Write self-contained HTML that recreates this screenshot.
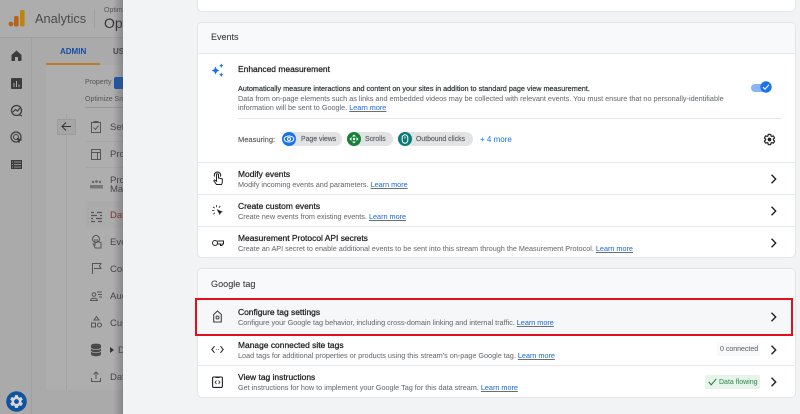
<!DOCTYPE html>
<html><head><meta charset="utf-8"><style>
html,body{margin:0;padding:0;width:800px;height:414px;overflow:hidden;background:#f1f3f4;font-family:"Liberation Sans",sans-serif}
.a{position:absolute;white-space:nowrap}
.t{position:absolute;white-space:nowrap;left:238px;font-size:8.45px;color:#202124;-webkit-text-stroke:.25px #202124}
.d{position:absolute;white-space:nowrap;left:238px;font-size:7.26px;color:#6b6e72;-webkit-text-stroke:.05px #6b6e72}
.d a,.l{color:#1a73e8;text-decoration:underline}
.g{position:absolute;white-space:nowrap;font-size:6.9px;color:#5a5d60;-webkit-text-stroke:.15px #5a5d60}
.line{position:absolute;height:1px;background:#e6e7e9}
svg{position:absolute;overflow:visible}
.sb{position:absolute;white-space:nowrap;font-size:9.5px;color:#444}
</style></head><body>
<!-- left dimmed app -->
<div class="a" style="left:0;top:0;width:123px;height:414px;background:#aaaaaa;overflow:hidden">
 <div class="a" style="left:0;top:0;width:123px;height:37px;background:#adadad"></div>
 <div class="a" style="left:0;top:37px;width:123px;height:1px;background:#a0a0a0"></div>
 <div class="a" style="left:31px;top:38px;width:1px;height:376px;background:#a0a0a0"></div>
 <div class="a" style="left:46px;top:65px;width:77px;height:325px;background:#aeaeae"></div>
 <div class="a" style="left:46px;top:63px;width:54px;height:2px;background:#bd7a28"></div>
 <div class="a" style="left:66px;top:114px;width:1px;height:276px;background:#a2a2a2"></div>
 <svg style="left:8px;top:9px" width="16" height="18" viewBox="0 0 16 18"><circle cx="3" cy="15" r="2.4" fill="#b5651a"/><rect x="6" y="7" width="4.6" height="10.5" rx="1.5" fill="#b5651a"/><rect x="12" y="1" width="4.6" height="16.5" rx="1.5" fill="#bd8410"/></svg>
 <div class="a" style="left:35px;top:11px;font-size:12.8px;color:#4a4a4a">Analytics</div>
 <div class="a" style="left:94px;top:9px;width:1px;height:19px;background:#a0a0a0"></div>
 <div class="a" style="left:104px;top:7px;font-size:7px;color:#555">Optimize</div>
 <div class="a" style="left:104px;top:15px;font-size:14px;color:#333">Optimize</div>
 <div class="a" style="left:60px;top:47px;font-size:8px;color:#174ea6;font-weight:bold">ADMIN</div>
 <div class="a" style="left:113px;top:47px;font-size:8px;color:#444;font-weight:bold">USER</div>
 <div class="a" style="left:85px;top:79px;font-size:7px;color:#555">Property</div>
 <div class="a" style="left:114px;top:77px;width:20px;height:12px;background:#1a55b0;border-radius:2px"></div>
 <div class="a" style="left:85px;top:96px;font-size:7px;color:#555">Optimize Smart</div>
 <div class="a" style="left:85px;top:107px;width:38px;height:1px;background:#999"></div>
 <div class="a" style="left:57px;top:119px;width:17px;height:14px;background:#a6a6a6;border:.5px solid #9c9c9c"></div>
 <svg style="left:57px;top:119px" width="18" height="15" viewBox="0 0 18 15"><path d="M14 7.500H5M9 3.500L5 7.500L9 11.500" fill="none" stroke="#333" stroke-width="1"/></svg>
 <!-- rail icons -->
 <svg style="left:11px;top:50px" width="11" height="11" viewBox="0 0 11 11"><path d="M.5 5L5.500 .5L10.500 5V11H7V7H4V11H.5Z" fill="#3c3c3c"/></svg>
 <svg style="left:11px;top:78px" width="11" height="11" viewBox="0 0 11 11"><rect width="11" height="11" rx="1" fill="#3c3c3c"/><path d="M3 9V5M5.500 9V3M8 9V6.500" stroke="#aaa" stroke-width="1"/></svg>
 <svg style="left:10px;top:104px" width="13" height="13" viewBox="0 0 13 13"><circle cx="6.500" cy="6.500" r="5" fill="none" stroke="#3c3c3c" stroke-width="1.300"/><path d="M3 8L5.500 5.500L7.500 7L10 4M9 10.500L12 12" fill="none" stroke="#3c3c3c" stroke-width="1.200"/></svg>
 <svg style="left:10px;top:131px" width="13" height="13" viewBox="0 0 13 13"><circle cx="6" cy="6" r="5" fill="none" stroke="#3c3c3c" stroke-width="1.200"/><circle cx="6" cy="6" r="2.500" fill="none" stroke="#3c3c3c" stroke-width="1"/><path d="M6.500 6.500L12.500 9L10 10L9 12.500Z" fill="#3c3c3c"/></svg>
 <svg style="left:11px;top:160px" width="11" height="9" viewBox="0 0 11 9"><rect width="11" height="9" fill="#3c3c3c"/><path d="M1 2H2M3 2H10M1 4.500H2M3 4.500H10M1 7H2M3 7H10" stroke="#aaa" stroke-width=".8"/></svg>
 <!-- nav -->
 <svg style="left:91px;top:121px" width="10" height="12" viewBox="0 0 10 12"><rect x=".5" y="1.500" width="9" height="10" fill="none" stroke="#555"/><path d="M3 1.500V.5H7V1.500M2.500 6.500L4.500 8.500L7.500 4.500" fill="none" stroke="#555"/></svg>
 <div class="sb" style="left:110px;top:122px">Setup</div>
 <div class="a" style="left:86px;top:141px;width:37px;height:1px;background:#a5a5a5"></div>
 <svg style="left:91px;top:149px" width="10" height="11" viewBox="0 0 10 11"><rect x=".5" y=".5" width="9" height="10" fill="none" stroke="#555"/><path d="M.5 3.500H9.500M6.500 3.500V10.500" stroke="#555" fill="none"/></svg>
 <div class="sb" style="left:110px;top:149px">Property</div>
 <div class="a" style="left:86px;top:167px;width:37px;height:1px;background:#a5a5a5"></div>
 <svg style="left:90px;top:180px" width="13" height="9" viewBox="0 0 13 9"><circle cx="3" cy="2" r="1.200" fill="#666"/><circle cx="6.500" cy="1.500" r="1.400" fill="#666"/><circle cx="10" cy="2" r="1.200" fill="#666"/><rect y="5" width="13" height="3.500" fill="#777"/></svg>
 <div class="sb" style="left:110px;top:175px">Property</div>
 <div class="sb" style="left:110px;top:184px">Manage</div>
 <div class="a" style="left:86px;top:201px;width:37px;height:27px;background:#ababab"></div>
 <svg style="left:91px;top:211px" width="11" height="12" viewBox="0 0 11 12"><path d="M0 1.500H3M6 1.500H11M0 4.500H6M9 4.500H11M0 7.500H2M5 7.500H11M0 10.500H4M7 10.500H11" stroke="#555" stroke-width="1.200"/></svg>
 <div class="sb" style="left:110px;top:210px;color:#7a2f2f">Data</div>
 <svg style="left:92px;top:235px" width="10" height="14" viewBox="0 0 10 14"><circle cx="4" cy="4" r="3.500" fill="none" stroke="#555"/><path d="M3 4V10L1.500 9L3 13H9V7.500L5 6.500V4" fill="none" stroke="#555"/></svg>
 <div class="sb" style="left:110px;top:237px">Events</div>
 <svg style="left:92px;top:263px" width="10" height="11" viewBox="0 0 10 11"><path d="M.5 11V.5H9L7.500 3L9 5.500H2" fill="none" stroke="#555"/></svg>
 <div class="sb" style="left:110px;top:264px">Conversions</div>
 <svg style="left:90px;top:291px" width="12" height="10" viewBox="0 0 12 10"><circle cx="4" cy="3.500" r="1.800" fill="none" stroke="#555"/><path d="M.5 9.500C1 6.500 7 6.500 7.500 9.500ZM7 1H12M8 3.500H12M9 6H12" fill="none" stroke="#555" stroke-width=".9"/></svg>
 <div class="sb" style="left:110px;top:291px">Audiences</div>
 <svg style="left:91px;top:316px" width="11" height="12" viewBox="0 0 11 12"><path d="M5.500 .5L8 4H3Z M.5 7H4.500V11H.5Z" fill="none" stroke="#555"/><circle cx="8.500" cy="9" r="2" fill="none" stroke="#555"/></svg>
 <div class="sb" style="left:110px;top:318px">Custom</div>
 <svg style="left:91px;top:343px" width="10" height="14" viewBox="0 0 10 14"><path d="M0 2.500C0 0 10 0 10 2.500V11C10 14 0 14 0 11Z" fill="#4a4a4a"/><path d="M0 5.500C3 7 7 7 10 5.500M0 8.500C3 10 7 10 10 8.500" stroke="#aaa" fill="none" stroke-width=".8"/></svg>
 <div class="a" style="left:110px;top:347px;width:0;height:0;border-left:4px solid #333;border-top:3px solid transparent;border-bottom:3px solid transparent"></div>
 <div class="sb" style="left:118px;top:345px">D</div>
 <svg style="left:91px;top:371px" width="10" height="11" viewBox="0 0 10 11"><path d="M.5 7V10.500H9.500V7M5 8V1M2.500 3.500L5 1L7.500 3.500" fill="none" stroke="#555"/></svg>
 <div class="sb" style="left:110px;top:372px">Data</div>
 <svg style="left:6px;top:391px" width="21" height="21" viewBox="0 0 21 21"><circle cx="10.500" cy="10.500" r="10.300" fill="#11539f"/><g transform="translate(2.500 2.500) scale(.667)"><path fill="#d8d8d8" d="M19.140 12.940c.04-.3.06-.61.06-.94 0-.32-.02-.64-.07-.94l2.030-1.580a.49.49 0 0 0 .12-.61l-1.920-3.320a.488.488 0 0 0-.59-.22l-2.390.96c-.5-.38-1.030-.7-1.620-.94l-.36-2.540a.484.484 0 0 0-.48-.41h-3.840c-.24 0-.43.17-.47.41l-.36 2.540c-.59.24-1.130.57-1.620.94l-2.390-.96c-.22-.08-.47 0-.59.22L2.740 8.870c-.12.21-.08.47.12.61l2.030 1.580c-.05.3-.09.63-.09.94s.02.64.07.94l-2.030 1.580a.49.49 0 0 0-.12.61l1.920 3.320c.12.22.37.29.59.22l2.390-.96c.5.38 1.030.7 1.620.94l.36 2.540c.05.24.24.41.48.41h3.840c.24 0 .44-.17.47-.41l.36-2.540c.59-.24 1.130-.56 1.620-.94l2.390.96c.22.08.47 0 .59-.22l1.920-3.320c.12-.22.07-.47-.12-.61l-2.010-1.580zM12 15.600c-1.980 0-3.600-1.620-3.600-3.600s1.620-3.600 3.600-3.600 3.600 1.620 3.600 3.600-1.620 3.600-3.600 3.600z"/></g></svg>
</div>
<div class="a" style="left:113px;top:0;width:10px;height:414px;background:linear-gradient(90deg,rgba(80,80,80,0),rgba(80,80,80,.4))"></div>

<!-- cards -->
<div class="a" style="left:197px;top:-10px;width:597px;height:20px;background:#fff;border:1px solid #e4e5e7;border-radius:5px"></div>
<div class="a" style="left:197px;top:22px;width:597px;height:234px;background:#fff;border:1px solid #e4e5e7;border-radius:5px;overflow:hidden">
 <div class="a" style="left:0;top:0;width:597px;height:30px;background:#f8f9fa;border-bottom:1px solid #e6e7e9"></div>
</div>
<div class="a" style="left:211px;top:32px;font-size:9px;color:#3c4043;-webkit-text-stroke:.1px #3c4043">Events</div>

<svg style="left:211px;top:63px" width="13" height="14" viewBox="0 0 13 14"><path d="M4.500 3.500L5.800 6.200L8.500 7.500L5.800 8.800L4.500 11.500L3.200 8.800L.5 7.500L3.200 6.200Z" fill="#1a73e8"/><path d="M10.300 .5L11 2L12.500 2.700L11 3.400L10.300 5L9.600 3.400L8 2.700L9.600 2Z" fill="#1a73e8"/><path d="M10.300 9.500L11 11L12.500 11.700L11 12.400L10.300 14L9.600 12.400L8 11.700L9.600 11Z" fill="#1a73e8"/></svg>
<div class="t" style="top:64px">Enhanced measurement</div>
<div class="a" style="left:238px;top:84px;color:#3c4043;font-size:7.26px;-webkit-text-stroke:.25px #3c4043">Automatically measure interactions and content on your sites in addition to standard page view measurement.</div>
<div class="d" style="top:93.500px">Data from on-page elements such as links and embedded videos may be collected with relevant events. You must ensure that no personally-identifiable</div>
<div class="d" style="top:102.500px">information will be sent to Google. <a>Learn more</a></div>
<div class="a" style="left:751px;top:84px;width:16px;height:8px;background:#8ab4f8;border-radius:4px"></div>
<svg style="left:760px;top:81px" width="12" height="12" viewBox="0 0 12 12"><circle cx="6" cy="6" r="5.700" fill="#1a73e8"/><path d="M3 6.200L5 8.200L9 3.800" fill="none" stroke="#fff" stroke-width="1.100"/></svg>
<div class="line" style="left:238px;top:118px;width:544px"></div>

<div class="g" style="left:238px;top:134.500px;font-size:7.5px">Measuring:</div>
<div class="a" style="left:282px;top:132px;width:60px;height:14px;background:#e2e3e4;border-radius:7px"></div>
<svg style="left:282px;top:132px" width="14" height="14" viewBox="0 0 14 14"><circle cx="7" cy="7" r="7" fill="#1a73e8"/><ellipse cx="7" cy="7" rx="4.800" ry="3" fill="none" stroke="#fff"/><circle cx="7" cy="7" r="1.500" fill="none" stroke="#fff"/></svg>
<div class="g" style="left:301px;top:136px">Page views</div>
<div class="a" style="left:347px;top:132px;width:46px;height:14px;background:#e2e3e4;border-radius:7px"></div>
<svg style="left:347px;top:132px" width="14" height="14" viewBox="0 0 14 14"><circle cx="7" cy="7" r="7" fill="#188038"/><path d="M7 2.500L9 4.500H5ZM7 11.500L9 9.500H5ZM2.500 7L4.500 5V9ZM11.500 7L9.500 5V9Z" fill="#fff"/><circle cx="7" cy="7" r="1.200" fill="#fff"/></svg>
<div class="g" style="left:365px;top:136px">Scrolls</div>
<div class="a" style="left:398px;top:132px;width:75px;height:14px;background:#e2e3e4;border-radius:7px"></div>
<svg style="left:398px;top:132px" width="14" height="14" viewBox="0 0 14 14"><circle cx="7" cy="7" r="7" fill="#0b7a75"/><rect x="4.200" y="2.800" width="5.600" height="8.400" rx="2.800" fill="none" stroke="#fff"/><path d="M7 4.500V6.500" stroke="#fff"/></svg>
<div class="g" style="left:416px;top:136px">Outbound clicks</div>
<div class="a" style="left:480px;top:134.500px;font-size:8px;color:#1a73e8">+ 4 more</div>
<svg style="left:762.500px;top:132.500px" width="13" height="13" viewBox="0 0 24 24"><path fill="none" stroke="#202124" stroke-width="2.200" d="M19.140 12.940c.04-.3.06-.61.06-.94 0-.32-.02-.64-.07-.94l2.030-1.580a.49.49 0 0 0 .12-.61l-1.920-3.320a.488.488 0 0 0-.59-.22l-2.390.96c-.5-.38-1.030-.7-1.620-.94l-.36-2.540a.484.484 0 0 0-.48-.41h-3.840c-.24 0-.43.17-.47.41l-.36 2.540c-.59.24-1.130.57-1.620.94l-2.390-.96c-.22-.08-.47 0-.59.22L2.740 8.870c-.12.21-.08.47.12.61l2.030 1.580c-.05.3-.09.63-.09.94s.02.64.07.94l-2.030 1.580a.49.49 0 0 0-.12.61l1.920 3.320c.12.22.37.29.59.22l2.390-.96c.5.38 1.030.7 1.620.94l.36 2.540c.05.24.24.41.48.41h3.840c.24 0 .44-.17.47-.41l.36-2.540c.59-.24 1.130-.56 1.620-.94l2.390.96c.22.08.47 0 .59-.22l1.920-3.320c.12-.22.07-.47-.12-.61l-2.010-1.580z"/><circle cx="12" cy="12" r="3.400" fill="#202124"/></svg>

<div class="line" style="left:198px;top:162px;width:597px"></div>
<svg style="left:213px;top:171px" width="10" height="14" viewBox="0 0 10 14"><path d="M1.600 5.500A3.200 3.200 0 1 1 7.400 5.500" fill="none" stroke="#202124" stroke-width="1"/><path d="M3.500 3.500C3.500 2.500 5.500 2.500 5.500 3.500V7L9.300 7.900V11.500L8.500 13.500H3.500L.8 9.800L1.500 9L3.500 10.200Z" fill="#fff" stroke="#202124" stroke-width="1"/></svg>
<div class="t" style="top:169px">Modify events</div>
<div class="d" style="top:180px">Modify incoming events and parameters. <a>Learn more</a></div>
<svg style="left:770px;top:174px" width="8" height="10" viewBox="0 0 8 10"><path d="M1.500 .8L5.700 5L1.500 9.200" fill="none" stroke="#202124" stroke-width="1.400"/></svg>

<div class="line" style="left:198px;top:194px;width:597px"></div>
<svg style="left:212px;top:205px" width="12" height="11" viewBox="0 0 13 12"><path d="M5 4.500L12 7.500L9.500 8.500L8.500 11Z" fill="#202124"/><path d="M5 0V2.500M1 2L3 3.500M0 6H2.500M1.500 10L3 8.500M9 1L7.500 3" stroke="#202124" stroke-width=".9"/></svg>
<div class="t" style="top:201px">Create custom events</div>
<div class="d" style="top:212px">Create new events from existing events. <a>Learn more</a></div>
<svg style="left:770px;top:206px" width="8" height="10" viewBox="0 0 8 10"><path d="M1.500 .8L5.700 5L1.500 9.200" fill="none" stroke="#202124" stroke-width="1.400"/></svg>

<div class="line" style="left:198px;top:226px;width:597px"></div>
<svg style="left:212px;top:238.500px" width="12" height="8" viewBox="0 0 12 8"><circle cx="3" cy="4" r="2.500" fill="none" stroke="#202124"/><path d="M5.500 2H11.500V5H10V6.500H8.500V5H5.500" fill="none" stroke="#202124"/></svg>
<div class="t" style="top:233px">Measurement Protocol API secrets</div>
<div class="d" style="top:244px">Create an API secret to enable additional events to be sent into this stream through the Measurement Protocol. <a>Learn more</a></div>
<svg style="left:770px;top:238px" width="8" height="10" viewBox="0 0 8 10"><path d="M1.500 .8L5.700 5L1.500 9.200" fill="none" stroke="#202124" stroke-width="1.400"/></svg>

<!-- Google tag -->
<div class="a" style="left:197px;top:268px;width:597px;height:128px;background:#fff;border:1px solid #e4e5e7;border-radius:5px;overflow:hidden">
 <div class="a" style="left:0;top:0;width:597px;height:30px;background:#f8f9fa"></div>
</div>
<div class="a" style="left:211px;top:279px;font-size:9.100px;color:#3c4043;-webkit-text-stroke:.1px #3c4043">Google tag</div>
<div class="a" style="left:195px;top:298px;width:598px;height:38px;box-sizing:border-box;background:#f6f7f9;border:2px solid #e2101e"></div>

<svg style="left:213px;top:310px" width="9" height="13" viewBox="0 0 9 13"><path d="M.7 4.500L4.500 1L8.300 4.500V12H.7Z" fill="none" stroke="#3c4043" stroke-width="1.100"/><circle cx="4.500" cy="7.500" r="1.500" fill="none" stroke="#3c4043"/></svg>
<div class="t" style="top:307px">Configure tag settings</div>
<div class="d" style="top:318px">Configure your Google tag behavior, including cross-domain linking and internal traffic. <a>Learn more</a></div>
<svg style="left:770px;top:312px" width="8" height="10" viewBox="0 0 8 10"><path d="M1.500 .8L5.700 5L1.500 9.200" fill="none" stroke="#202124" stroke-width="1.400"/></svg>

<svg style="left:211px;top:345px" width="13" height="9" viewBox="0 0 13 9"><path d="M3.500 1.200L.8 4.500L3.500 7.800M9.500 1.200L12.200 4.500L9.500 7.800" fill="none" stroke="#202124"/><path d="M5.500 4.500H6M7.200 4.500H7.700" stroke="#202124"/></svg>
<div class="t" style="top:340px">Manage connected site tags</div>
<div class="d" style="top:350.500px">Load tags for additional properties or products using this stream's on-page Google tag. <a>Learn more</a></div>
<div class="a" style="left:717px;top:343px;width:43px;height:13px;background:#f8f9fa;border-radius:2px"></div>
<div class="a" style="left:720px;top:345.500px;font-size:7px;color:#5f6368;-webkit-text-stroke:.05px #5f6368">0 connected</div>
<svg style="left:770px;top:345px" width="8" height="10" viewBox="0 0 8 10"><path d="M1.500 .8L5.700 5L1.500 9.200" fill="none" stroke="#202124" stroke-width="1.400"/></svg>

<div class="line" style="left:198px;top:365px;width:596px"></div>
<svg style="left:212px;top:375px" width="11" height="13" viewBox="0 0 11 13"><rect x=".6" y="2" width="9.800" height="10.400" rx="1" fill="none" stroke="#202124" stroke-width="1.100"/><path d="M3.500 1.500H7.500V3H3.500Z" fill="#202124"/><path d="M4.500 5.500L3 7.300L4.500 9M6.500 5.500L8 7.300L6.500 9" fill="none" stroke="#202124" stroke-width=".8"/></svg>
<div class="t" style="top:372px">View tag instructions</div>
<div class="d" style="top:383px">Get instructions for how to implement your Google Tag for this data stream. <a>Learn more</a></div>
<div class="a" style="left:705px;top:375px;width:55px;height:13.500px;background:#e6f4ea;border-radius:2px"></div>
<svg style="left:708px;top:378px" width="9" height="8" viewBox="0 0 9 8"><path d="M.8 4L3.200 6.800L8.200 1" fill="none" stroke="#188038" stroke-width="1"/></svg>
<div class="a" style="left:719px;top:378.500px;font-size:7px;color:#3d8a57;-webkit-text-stroke:.05px #3d8a57">Data flowing</div>
<svg style="left:770px;top:377px" width="8" height="10" viewBox="0 0 8 10"><path d="M1.500 .8L5.700 5L1.500 9.200" fill="none" stroke="#202124" stroke-width="1.400"/></svg>
</body></html>
